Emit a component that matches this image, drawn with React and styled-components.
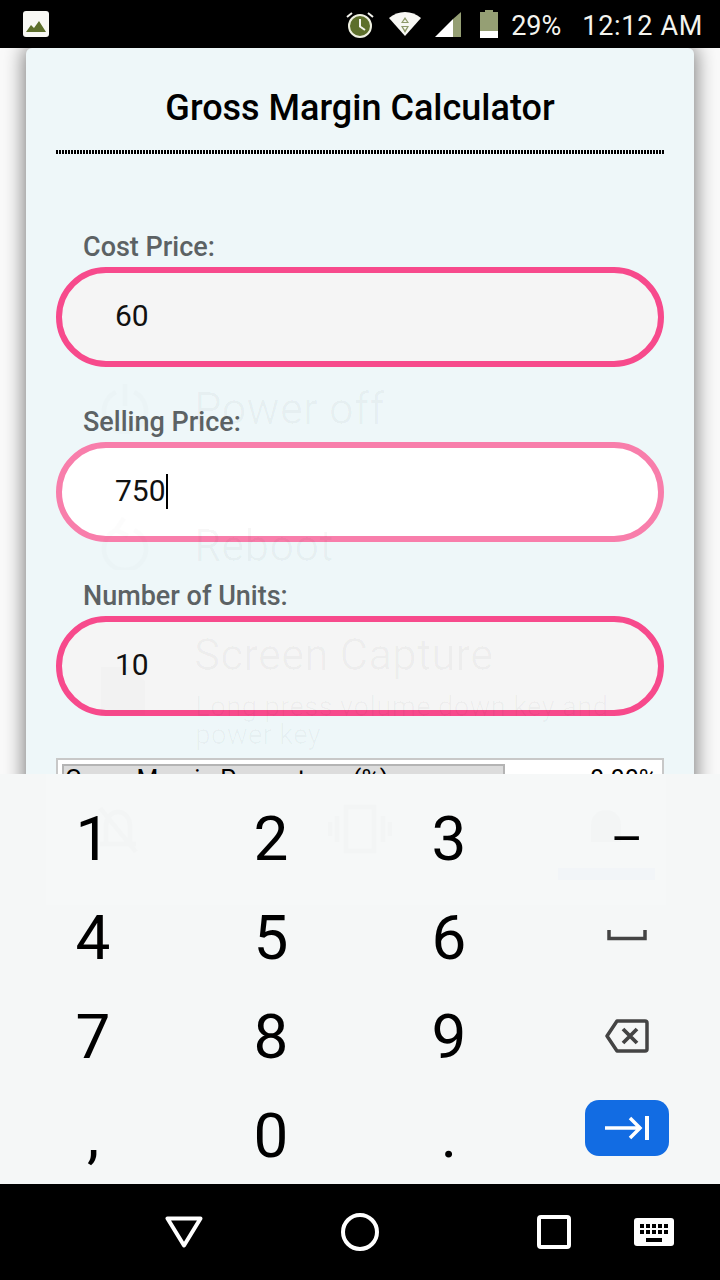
import styled, { createGlobalStyle } from 'styled-components';

const GlobalStyle = createGlobalStyle`
  html, body {
    margin: 0;
    padding: 0;
    background: #fff;
  }
  * {
    box-sizing: border-box;
  }
`;

const Screen = styled.div`
  position: relative;
  width: 720px;
  height: 1280px;
  display: flex;
  flex-direction: column;
  overflow: hidden;
  font-family: Roboto, 'Liberation Sans', sans-serif;
`;
const StatusBar = styled.div`
  height: 48px;
  flex: none;
  background: #000;
  display: flex;
  align-items: center;
  padding: 0 17px 0 23px;
  color: #f4f4ee;
  font-size: 27px;
  position: relative;
  z-index: 2;
`;
const StatusRight = styled.div`
  margin-left: auto;
  display: flex;
  align-items: center;
`;
const StatusIcon = styled.span`
  margin-left: ${(p) => p.$gap}px;
  display: flex;
`;
const Percent = styled.span`
  margin-left: 13px;
  padding-top: 3px;
`;
const Clock = styled.span`
  margin-left: 21px;
  padding-top: 3px;
  letter-spacing: 0.7px;
`;
const Body = styled.div`
  flex: 1;
  min-height: 0;
  overflow: hidden;
  padding: 0 26px;
  background: #fafafa;
`;
const Card = styled.div`
  background: #eef7f9;
  padding: 0 30px;
  height: 760px;
  border-radius: 6px;
  box-shadow: 0 0 20px 2px rgba(0, 0, 0, 0.5);
`;
const Title = styled.h1`
  margin: 0;
  height: 102px;
  padding-top: 38px;
  text-align: center;
  font-size: 36px;
  line-height: 44px;
  font-weight: 500;
  color: #000;
`;
const DottedRule = styled.div`
  height: 4px;
  background: repeating-linear-gradient(90deg, #000 0 2px, transparent 2px 3px);
`;
const Form = styled.div`
  padding-top: 75px;
`;
const Field = styled.div`
  margin-bottom: 36.5px;
`;
const Label = styled.div`
  padding-left: 27px;
  height: 38px;
  font-size: 27px;
  line-height: 36px;
  font-weight: 500;
  color: #5c6264;
`;
const Input = styled.div`
  height: 100px;
  border-radius: 50px;
  border: 6px solid ${(p) => (p.$focused ? '#f87eab' : '#f74a8c')};
  background: ${(p) => (p.$focused ? '#fff' : '#f5f5f5')};
  display: flex;
  align-items: center;
  padding: 0 0 3px 53px;
  font-size: 30px;
  color: #111;
`;
const Caret = styled.span`
  width: 2px;
  height: 35px;
  margin: 3px 0 0 0;
  background: #000;
`;
const ResultTable = styled.div`
  margin-top: 42px;
  border: 2px solid #c8c8c8;
  background: #fff;
  padding: 4px;
  display: flex;
  height: 120px;
`;
const ResultLabel = styled.div`
  width: 443px;
  flex: none;
  background: #dcdcdc;
  border: 2px solid #b4b4b4;
  font-size: 25px;
  line-height: 28px;
  padding-left: 1px;
  color: #000;
`;
const ResultValue = styled.div`
  flex: 1;
  text-align: right;
  font-size: 25px;
  line-height: 28px;
  color: #000;
  padding: 2px 1px 0 0;
`;
const Keyboard = styled.div`
  height: 410px;
  flex: none;
  background: linear-gradient(#f6f8f8, #f6f8f8) 46px 0 / 620px 131px no-repeat, #f5f7f7;
  position: relative;
  z-index: 1;
  display: grid;
  grid-template-columns: 178px 178px 178px 178px;
  grid-template-rows: repeat(4, 99px);
  padding: 15px 0 0 4px;
`;
const Key = styled.div`
  display: flex;
  align-items: center;
  justify-content: center;
  font-size: ${(p) => p.$size || 62}px;
  padding-bottom: ${(p) => p.$lift || 0}px;
  color: #000;
  font-weight: 400;
`;
const EnterKey = styled.div`
  width: 84px;
  height: 56px;
  border-radius: 14px;
  background: #126ce3;
  display: flex;
  align-items: center;
  justify-content: center;
`;
const NavBar = styled.div`
  height: 96px;
  flex: none;
  background: #000;
  display: grid;
  grid-template-columns: 184px 176px 194px 120px;
  position: relative;
  z-index: 2;
`;
const NavSlot = styled.div`
  display: flex;
  align-items: center;
  justify-content: flex-end;
  transform: translateX(${(p) => p.$shift || 0}px);
`;
/* the power menu fading out on top of the page */
const Ghost = styled.div`
  position: absolute;
  left: ${(p) => p.$x}px;
  top: ${(p) => p.$y}px;
  font-size: ${(p) => p.$size}px;
  line-height: 1.2;
  color: rgba(0, 0, 0, 0.028);
  white-space: nowrap;
  z-index: 3;
  pointer-events: none;
`;
const GhostIcon = styled.svg`
  position: absolute;
  left: ${(p) => p.$x}px;
  top: ${(p) => p.$y}px;
  z-index: 3;
  pointer-events: none;
  fill: ${(p) => (p.$filled ? 'rgba(0, 0, 0, 0.01)' : 'none')};
  stroke: ${(p) => (p.$filled ? 'none' : 'rgba(0, 0, 0, 0.012)')};
  stroke-width: 5;
`;
const GhostBar = styled.div`
  position: absolute;
  left: 558px;
  top: 868px;
  width: 97px;
  height: 12px;
  background: rgba(70, 120, 255, 0.025);
  z-index: 3;
  pointer-events: none;
`;

const GalleryIcon = () => (
  <svg width="26" height="26" viewBox="0 0 26 26">
    <rect width="26" height="26" rx="3" fill="#f8f8f4" />
    <path d="M3 21l5-7 3 3 5-7 7 11z" fill="#5d6f2b" />
  </svg>
);
const AlarmIcon = () => (
  <svg width="28" height="27" viewBox="0 0 28 27">
    <circle cx="14" cy="15" r="11" fill="#5d6f2b" stroke="#eef0e0" strokeWidth="2" />
    <path d="M14 8v7.500l5 3.500" fill="none" stroke="#f4f4ee" strokeWidth="2" />
    <path d="M1 6l5-4M27 6l-5-4" stroke="#f4f4ee" strokeWidth="2" />
  </svg>
);
const WifiIcon = () => (
  <svg width="32" height="24" viewBox="0 0 32 24">
    <path d="M0 6C9-2 23-2 32 6L16 24z" fill="#f8f8f4" />
    <path d="M16 5l-4 6h8zM16 21l4-7h-8z" fill="#8f9a6b" />
    <path d="M16 7.500l-2 2.500h4zM16 18l2-3h-4z" fill="#f8f8f4" />
  </svg>
);
const SignalIcon = () => (
  <svg width="26" height="25" viewBox="0 0 26 25">
    <path d="M0 25L18 7v18z" fill="#fff" />
    <path d="M18 7l8-7v25h-8z" fill="#959f74" />
  </svg>
);
const BatteryIcon = () => (
  <svg width="18" height="28" viewBox="0 0 18 28">
    <path d="M5 0h8v2h5v26H0V2h5z" fill="#959f74" />
    <rect y="21" width="18" height="7" fill="#fff" />
  </svg>
);
const SpaceIcon = () => (
  <svg width="40" height="12" viewBox="0 0 40 12">
    <path d="M2 1v8.500h36V1" fill="none" stroke="#444" strokeWidth="3.500" />
  </svg>
);
const BackspaceIcon = () => (
  <svg width="44" height="34" viewBox="0 0 44 34">
    <path
      d="M12 2h28a2 2 0 0 1 2 2v26a2 2 0 0 1-2 2H12L2 17z"
      fill="none"
      stroke="#444"
      strokeWidth="3.500"
      strokeLinejoin="round"
    />
    <path d="M18 10l14 14M32 10L18 24" stroke="#444" strokeWidth="3.800" />
  </svg>
);
const TabIcon = () => (
  <svg width="44" height="26" viewBox="0 0 44 26">
    <path d="M0 13h36M25 3l10 10-10 10" fill="none" stroke="#fff" strokeWidth="3.500" />
    <path d="M42 1v24" stroke="#fff" strokeWidth="4" />
  </svg>
);
const BackIcon = () => (
  <svg width="38" height="32" viewBox="0 0 38 32">
    <path d="M2.500 2.500h33L19 29.500z" fill="none" stroke="#fff" strokeWidth="4" strokeLinejoin="round" />
  </svg>
);
const HomeIcon = () => (
  <svg width="38" height="38" viewBox="0 0 38 38">
    <circle cx="19" cy="19" r="17" fill="none" stroke="#fff" strokeWidth="4" />
  </svg>
);
const RecentIcon = () => (
  <svg width="34" height="34" viewBox="0 0 34 34">
    <rect x="2" y="2" width="30" height="30" rx="2" fill="none" stroke="#fff" strokeWidth="4" />
  </svg>
);
const KeyboardIcon = () => (
  <svg width="40" height="28" viewBox="0 0 40 28">
    <rect width="40" height="28" rx="3" fill="#fff" />
    <path
      d="M6 6h4v4H6zM12 6h4v4h-4zM18 6h4v4h-4zM24 6h4v4h-4zM30 6h4v4h-4zM6 12h4v4H6zM12 12h4v4h-4zM18 12h4v4h-4zM24 12h4v4h-4zM30 12h4v4h-4zM12 20h16v4H12z"
      fill="#000"
    />
  </svg>
);

const fields = [
  { label: 'Cost Price:', value: '60' },
  { label: 'Selling Price:', value: '750', focused: true },
  { label: 'Number of Units:', value: '10' }
];

const keys = [
  { label: '1' },
  { label: '2' },
  { label: '3' },
  { label: '–', size: 50 },
  { label: '4' },
  { label: '5' },
  { label: '6' },
  { label: <SpaceIcon />, lift: 6 },
  { label: '7' },
  { label: '8' },
  { label: '9' },
  { label: <BackspaceIcon />, lift: 2 },
  { label: ',' },
  { label: '0' },
  { label: '.' }
];

const App = () => {
  return (
    <Screen>
      <GlobalStyle />
      <StatusBar>
        <GalleryIcon />
        <StatusRight>
          <StatusIcon $gap={0}>
            <AlarmIcon />
          </StatusIcon>
          <StatusIcon $gap={15}>
            <WifiIcon />
          </StatusIcon>
          <StatusIcon $gap={14}>
            <SignalIcon />
          </StatusIcon>
          <StatusIcon $gap={19}>
            <BatteryIcon />
          </StatusIcon>
          <Percent>29%</Percent>
          <Clock>12:12 AM</Clock>
        </StatusRight>
      </StatusBar>
      <Body>
        <Card>
          <Title>Gross Margin Calculator</Title>
          <DottedRule />
          <Form>
            {fields.map((f) => (
              <Field key={f.label}>
                <Label>{f.label}</Label>
                <Input $focused={f.focused}>
                  {f.value}
                  {f.focused && <Caret />}
                </Input>
              </Field>
            ))}
          </Form>
          <ResultTable>
            <ResultLabel>Gross Margin Percentage (%):</ResultLabel>
            <ResultValue>0.00%</ResultValue>
          </ResultTable>
        </Card>
      </Body>
      <Keyboard>
        {keys.map((k, i) => (
          <Key key={i} $size={k.size} $lift={k.lift}>
            {k.label}
          </Key>
        ))}
        <Key $lift={15}>
          <EnterKey>
            <TabIcon />
          </EnterKey>
        </Key>
      </Keyboard>
      <NavBar>
        <NavSlot $shift={19}>
          <BackIcon />
        </NavSlot>
        <NavSlot $shift={19}>
          <HomeIcon />
        </NavSlot>
        <NavSlot $shift={17}>
          <RecentIcon />
        </NavSlot>
        <NavSlot>
          <KeyboardIcon />
        </NavSlot>
      </NavBar>
      <GhostIcon $x={100} $y={382} width="50" height="52" viewBox="0 0 50 52">
        <path d="M16 10a21 21 0 1 0 18 0M25 2v22" />
      </GhostIcon>
      <GhostIcon $x={100} $y={516} width="50" height="54" viewBox="0 0 50 54">
        <path d="M16 14a21 21 0 1 0 18 0M24 2l-8 12 12 6" />
      </GhostIcon>
      <GhostIcon $x={97} $y={663} $filled width="52" height="56" viewBox="0 0 52 56">
        <path d="M4 4h30l14 14v34H4z" />
      </GhostIcon>
      <GhostIcon $x={96} $y={804} width="44" height="52" viewBox="0 0 44 52">
        <path d="M4 4l36 44M10 38V22c0-8 5-14 12-14s12 6 12 14v16M4 40h36" />
      </GhostIcon>
      <GhostIcon $x={328} $y={804} width="64" height="50" viewBox="0 0 64 50">
        <path d="M18 3h28v44H18zM9 12v26M2 18v14M55 12v26M62 18v14" />
      </GhostIcon>
      <GhostIcon $x={585} $y={804} $filled width="42" height="48" viewBox="0 0 42 48">
        <path d="M6 38V20c0-8 6-14 15-14s15 6 15 14v18z" />
      </GhostIcon>
      <GhostBar />
      <Ghost $x={194} $y={383} $size={44}>Power off</Ghost>
      <Ghost $x={194} $y={520} $size={44}>Reboot</Ghost>
      <Ghost $x={194} $y={629} $size={44}>Screen Capture</Ghost>
      <Ghost $x={195} $y={690} $size={28}>Long press volume down key and</Ghost>
      <Ghost $x={195} $y={718} $size={28}>power key</Ghost>
    </Screen>
  );
};

export default App;
